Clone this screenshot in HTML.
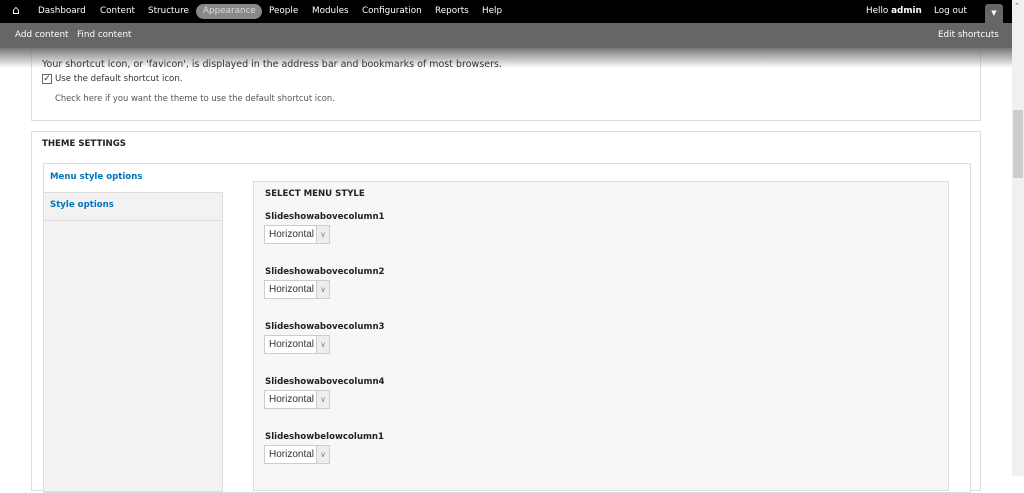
<!DOCTYPE html>
<html><head><meta charset="utf-8"><style>
*{margin:0;padding:0;box-sizing:border-box}
body{width:1024px;height:476px;overflow:hidden;background:#fff;font-family:"DejaVu Sans","Liberation Sans",sans-serif;font-size:9px;color:#333;position:relative}
.abs{position:absolute}
#tb{left:0;top:0;width:1012px;height:23px;background:#000;color:#fff;font-size:8.8px}
#tb span{position:absolute;top:6px}
#sb{left:0;top:23px;width:1012px;height:25px;background:#666;color:#fff;font-size:8.8px}
#sh{left:0;top:48px;width:1012px;height:20px;background:linear-gradient(#777,rgba(255,255,255,0))}
.box{border:1px solid #ddd;background:#fff}
.lbl{font-weight:bold;font-size:8.6px;color:#222}
.sel{position:absolute;width:66px;height:19px;border:1px solid #ccc;background:#fff;font-family:"Liberation Sans",sans-serif;font-size:10px;padding:3px 4px;color:#333}
.sel i{position:absolute;right:0;top:0;width:13px;height:17px;border-left:1px solid #ccc;background:#eee;font-style:normal;font-size:8px;color:#888;text-align:center;line-height:17px}
</style></head><body>
<div id="tb" class="abs">
<span style="left:12px;top:3px;font-size:12px">&#8962;</span>
<span style="left:38px">Dashboard</span>
<span style="left:100px">Content</span>
<span style="left:148px">Structure</span>
<div class="abs" style="left:196px;top:4px;width:66px;height:15px;border-radius:8px;background:#888;"></div>
<span style="left:203px;color:#ddd">Appearance</span>
<span style="left:269px">People</span>
<span style="left:312px">Modules</span>
<span style="left:362px">Configuration</span>
<span style="left:435px">Reports</span>
<span style="left:482px">Help</span>
<span style="left:866px">Hello <b>admin</b></span>
<span style="left:934px">Log out</span>
<div class="abs" style="left:985px;top:4px;width:18px;height:19px;background:#666;border-radius:3px 3px 0 0;font-size:7px;text-align:center;line-height:19px">&#9660;</div>
</div>
<div id="sb" class="abs">
<span class="abs" style="left:15px;top:7px">Add content</span>
<span class="abs" style="left:77px;top:7px">Find content</span>
<span class="abs" style="left:938px;top:7px">Edit shortcuts</span>
</div>
<div class="abs box" style="left:31px;top:48px;width:950px;height:73px;border-top:none"></div>
<div id="sh" class="abs"></div>
<div class="abs" style="left:42px;top:59px;font-size:9.5px;color:#333">Your shortcut icon, or 'favicon', is displayed in the address bar and bookmarks of most browsers.</div>
<div class="abs" style="left:42px;top:74px;width:10px;height:10px;border:1px solid #666;font-size:9px;line-height:8px;text-align:center">&#10003;</div>
<div class="abs" style="left:55px;top:74px;font-size:8.6px">Use the default shortcut icon.</div>
<div class="abs" style="left:55px;top:93px;font-size:8.4px;color:#555">Check here if you want the theme to use the default shortcut icon.</div>

<div class="abs box" style="left:31px;top:131px;width:950px;height:360px"></div>
<div class="abs lbl" style="left:42px;top:139px">THEME SETTINGS</div>
<div class="abs box" style="left:43px;top:163px;width:928px;height:330px"></div>
<div class="abs" style="left:43px;top:192px;width:180px;height:300px;background:#f2f2f2;border:1px solid #ddd"></div>
<div class="abs" style="left:43px;top:220px;width:180px;height:1px;background:#ddd"></div>
<div class="abs" style="left:50px;top:172px;font-weight:bold;font-size:8.6px;color:#0074bd">Menu style options</div>
<div class="abs" style="left:50px;top:200px;font-weight:bold;font-size:8.6px;color:#0074bd">Style options</div>
<div class="abs" style="left:253px;top:181px;width:696px;height:310px;background:#f7f7f7;border:1px solid #ddd"></div>
<div class="abs lbl" style="left:265px;top:189px">SELECT MENU STYLE</div>

<div class="abs lbl" style="left:265px;top:212px">Slideshowabovecolumn1</div>
<div class="sel" style="left:264px;top:225px">Horizontal<i>&#8744;</i></div>
<div class="abs lbl" style="left:265px;top:267px">Slideshowabovecolumn2</div>
<div class="sel" style="left:264px;top:280px">Horizontal<i>&#8744;</i></div>
<div class="abs lbl" style="left:265px;top:322px">Slideshowabovecolumn3</div>
<div class="sel" style="left:264px;top:335px">Horizontal<i>&#8744;</i></div>
<div class="abs lbl" style="left:265px;top:377px">Slideshowabovecolumn4</div>
<div class="sel" style="left:264px;top:390px">Horizontal<i>&#8744;</i></div>
<div class="abs lbl" style="left:265px;top:432px">Slideshowbelowcolumn1</div>
<div class="sel" style="left:264px;top:445px">Horizontal<i>&#8744;</i></div>

<div class="abs" style="left:1012px;top:0;width:12px;height:476px;background:#f0f0f0"></div>
<div class="abs" style="left:1014px;top:2px;font-size:7px;color:#555">&#8963;</div>
<div class="abs" style="left:1013px;top:110px;width:10px;height:68px;background:#cdcdcd"></div>
</body></html>
